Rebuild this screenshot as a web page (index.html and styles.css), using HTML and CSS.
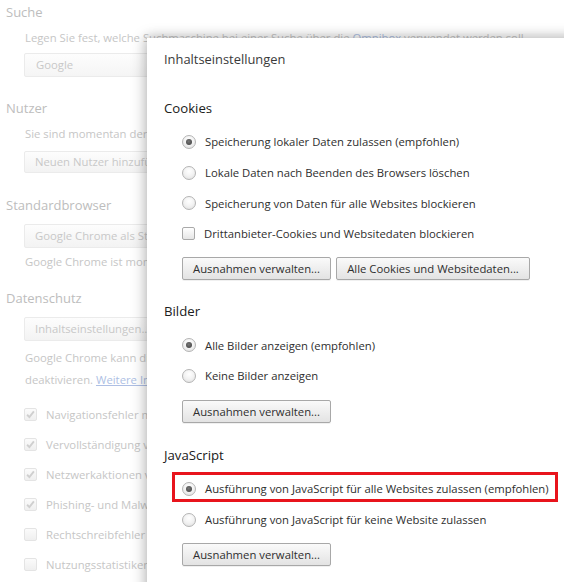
FILE: index.html
```html
<!DOCTYPE html>
<html lang="de">
<head>
<meta charset="utf-8">
<title>Inhaltseinstellungen</title>
<link rel="stylesheet" href="styles.css">
</head>
<body>
<div class="page">
  <h2 class="sec-title first">Suche</h2>
  <p class="bg-text l1">Legen Sie fest, welche Suchmaschine bei einer Suche über die <span class="bg-link">Omnibox</span> verwendet werden soll.</p>
  <div class="bg-select">Google</div>

  <h2 class="sec-title t2">Nutzer</h2>
  <p class="bg-text l2">Sie sind momentan der einzige Nutzer von Google Chrome.</p>
  <div class="bg-button b1">Neuen Nutzer hinzufügen...</div>

  <h2 class="sec-title t3">Standardbrowser</h2>
  <div class="bg-button b2">Google Chrome als Standardbrowser festlegen</div>
  <p class="bg-text l3">Google Chrome ist momentan nicht Ihr Standardbrowser.</p>

  <h2 class="sec-title t4">Datenschutz</h2>
  <div class="bg-button b2">Inhaltseinstellungen...</div>
  <p class="bg-text para">Google Chrome kann die Nutzung mancher Webdienste verbessern. Sie können diese Dienste optional<br>deaktivieren. <span class="bg-link u">Weitere Informationen</span></p>

  <ul class="bg-checks">
    <li><span class="bg-cb checked"><svg viewBox="0 0 13 13"><polyline points="2.5,6.8 5.2,9.5 10.5,2.8"/></svg></span>Navigationsfehler mithilfe eines Webdienstes beheben</li>
    <li><span class="bg-cb checked"><svg viewBox="0 0 13 13"><polyline points="2.5,6.8 5.2,9.5 10.5,2.8"/></svg></span>Vervollständigung von Suchanfragen verwenden</li>
    <li><span class="bg-cb checked"><svg viewBox="0 0 13 13"><polyline points="2.5,6.8 5.2,9.5 10.5,2.8"/></svg></span>Netzwerkaktionen vorhersehen</li>
    <li><span class="bg-cb checked"><svg viewBox="0 0 13 13"><polyline points="2.5,6.8 5.2,9.5 10.5,2.8"/></svg></span>Phishing- und Malware-Schutz aktivieren</li>
    <li><span class="bg-cb"></span>Rechtschreibfehler mithilfe eines Webdienstes korrigieren</li>
    <li><span class="bg-cb"></span>Nutzungsstatistiken und Absturzberichte senden</li>
  </ul>
</div>

<div class="dialog">
  <h1 class="dlg-title">Inhaltseinstellungen</h1>

  <section class="group g-cookies">
    <h3 class="group-title">Cookies</h3>
    <div class="opt"><span class="radio on"></span>Speicherung lokaler Daten zulassen (empfohlen)</div>
    <div class="opt"><span class="radio"></span>Lokale Daten nach Beenden des Browsers löschen</div>
    <div class="opt"><span class="radio"></span>Speicherung von Daten für alle Websites blockieren</div>
    <div class="opt"><span class="check"></span>Drittanbieter-Cookies und Websitedaten blockieren</div>
    <div class="btn-row">
      <button class="btn w1">Ausnahmen verwalten...</button>
      <button class="btn w2">Alle Cookies und Websitedaten...</button>
    </div>
  </section>

  <section class="group g-images">
    <h3 class="group-title">Bilder</h3>
    <div class="opt"><span class="radio on"></span>Alle Bilder anzeigen (empfohlen)</div>
    <div class="opt"><span class="radio"></span>Keine Bilder anzeigen</div>
    <div class="btn-row">
      <button class="btn w1">Ausnahmen verwalten...</button>
    </div>
  </section>

  <section class="group g-js">
    <h3 class="group-title">JavaScript</h3>
    <div class="opt marked"><span class="radio on"></span>Ausführung von JavaScript für alle Websites zulassen (empfohlen)<span class="mark"></span></div>
    <div class="opt"><span class="radio"></span>Ausführung von JavaScript für keine Website zulassen</div>
    <div class="btn-row">
      <button class="btn w1">Ausnahmen verwalten...</button>
    </div>
  </section>
</div>
</body>
</html>
```

FILE: styles.css
```css
* { box-sizing: border-box; }

html, body {
  margin: 0;
  padding: 0;
  width: 564px;
  height: 582px;
  overflow: hidden;
  background: #ffffff;
}

body {
  font-family: "Open Sans", "Noto Sans", sans-serif;
  font-size: 11.3px;
  position: relative;
}

/* ---------- background settings page (faded) ---------- */
.page {
  padding: 2px 0 0 6px;
  color: #c6c6c6;
  white-space: nowrap;
}

.sec-title {
  margin: 0;
  font-weight: normal;
  font-size: 13px;
  line-height: 20px;
  color: #bdbdbd;
}
.sec-title.t2 { margin-top: 21px; }
.sec-title.t3 { margin-top: 22px; }
.sec-title.t4 { margin-top: 16px; }

.bg-text {
  margin: 0 0 0 19px;
  line-height: 20px;
}
.bg-text.l1 { margin-top: 6px; }
.bg-text.l2 { margin-top: 6px; }
.bg-text.l3 { margin-top: 4px; }
.bg-text.para { margin-top: 6px; line-height: 22px; }

.bg-link { color: #aebfe4; }
.bg-link.u { text-decoration: underline; }

.bg-select {
  margin: 5px 0 0 18px;
  height: 24px;
  width: 300px;
  border: 1px solid #ebebeb;
  border-radius: 2px;
  background: linear-gradient(#fdfdfd, #f5f5f5);
  padding-left: 11px;
  line-height: 22px;
  color: #c8c8c8;
}

.bg-button {
  margin: 0 0 0 18px;
  width: 300px;
  border: 1px solid #ebebeb;
  border-radius: 2px;
  background: linear-gradient(#fdfdfd, #f3f3f3);
  padding-left: 10px;
  color: #c8c8c8;
}
.bg-button.b1 { margin-top: 7px; height: 22px; line-height: 20px; }
.bg-button.b2 { margin-top: 9px; height: 24px; line-height: 22px; }

.bg-checks {
  list-style: none;
  margin: 8px 0 0 18px;
  padding: 0;
}
.bg-checks li {
  height: 30px;
  display: flex;
  align-items: center;
  gap: 9px;
}
.bg-cb {
  width: 13px;
  height: 13px;
  border: 1px solid #e4e4e4;
  border-radius: 2px;
  background: linear-gradient(#fbfbfb, #efefef);
  display: inline-flex;
}
.bg-cb svg { width: 11px; height: 11px; }
.bg-cb polyline {
  fill: none;
  stroke: #cfcfcf;
  stroke-width: 2.2;
}

/* ---------- dialog ---------- */
.dialog {
  position: absolute;
  left: 147px;
  top: 38px;
  width: 440px;
  height: 560px;
  background: #ffffff;
  box-shadow: -2px 0 14px rgba(0, 0, 0, 0.22), 0 -2px 10px rgba(0, 0, 0, 0.12);
  padding: 11px 0 0 17px;
  color: #2e2e2e;
  white-space: nowrap;
}

.dlg-title {
  margin: 0;
  font-weight: normal;
  font-size: 12.9px;
  line-height: 20px;
  color: #3a3a3a;
}

.group-title {
  margin: 0;
  font-weight: normal;
  font-size: 13.2px;
  line-height: 20px;
  color: #202020;
}
.g-cookies { margin-top: 29px; }
.g-images { margin-top: 21px; }
.g-js { margin-top: 22px; }

.group-title + .opt { margin-top: 8.5px; }

.opt {
  position: relative;
  margin-left: 18px;
  height: 30.7px;
  display: flex;
  align-items: center;
  gap: 9px;
}

.radio {
  width: 14px;
  height: 14px;
  border-radius: 50%;
  border: 1px solid #b4b4b4;
  background: radial-gradient(circle at 50% 35%, #ffffff 0%, #f2f2f2 50%, #dcdcdc 100%);
  display: inline-flex;
  align-items: center;
  justify-content: center;
  flex: none;
}
.radio.on::after {
  content: "";
  width: 6px;
  height: 6px;
  border-radius: 50%;
  background: radial-gradient(circle at 45% 40%, #777, #3c3c3c);
}

.check {
  width: 13px;
  height: 13px;
  border: 1px solid #a9a9a9;
  border-radius: 2px;
  background: linear-gradient(#ffffff, #e6e6e6);
  flex: none;
}

.opt.marked { display: flex; width: 376px; }
.mark {
  position: absolute;
  left: -10px;
  right: 0;
  top: -2px;
  bottom: 2px;
  border: 3px solid #e8141c;
}

.btn-row {
  margin: 8px 0 0 18px;
  display: flex;
  gap: 5px;
}
.g-images .btn-row { margin-top: 9px; }
.g-js .btn-row { margin-top: 8px; }

.btn {
  font-family: inherit;
  font-size: 11.3px;
  color: #2e2e2e;
  height: 23px;
  padding: 0;
  border: 1px solid #a8a8a8;
  border-radius: 2px;
  background: linear-gradient(#fafafa, #e3e3e3);
  box-shadow: 0 1px 0 rgba(0, 0, 0, 0.06);
}
.btn.w1 { width: 149px; }
.btn.w2 { width: 194px; }
```
